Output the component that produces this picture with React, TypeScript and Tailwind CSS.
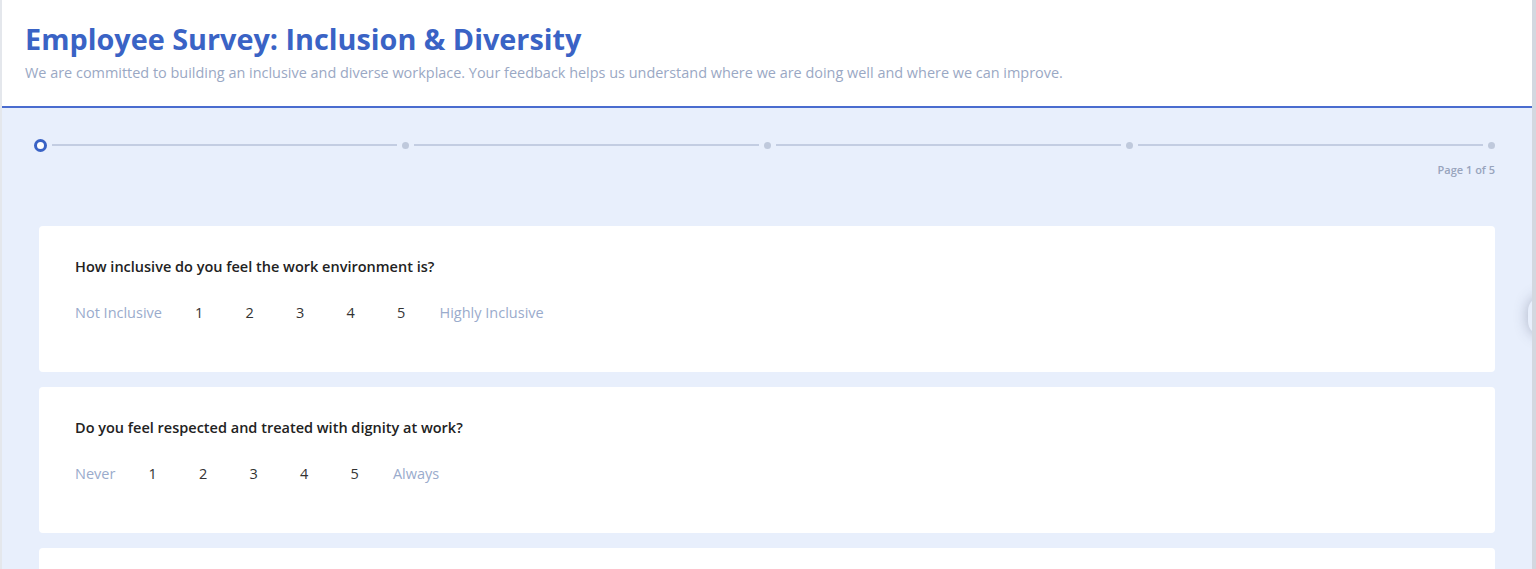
import React from "react";

const questions = [
  { text: "How inclusive do you feel the work environment is?", low: "Not Inclusive", high: "Highly Inclusive" },
  { text: "Do you feel respected and treated with dignity at work?", low: "Never", high: "Always" },
];

function ProgressBar() {
  const steps = [1, 2, 3, 4, 5];
  return (
    <div className="flex flex-col">
      <div className="flex items-center h-[14px] pl-[32px] pr-[37px]">
        {steps.map((s, i) => (
          <React.Fragment key={s}>
            {i > 0 && <div className="flex-1 h-[2px] bg-[#c3cde2] mx-[5px]" />}
            {i === 0 ? (
              <div className="w-[13px] h-[13px] rounded-full border-[3px] border-[#3a63c5] bg-white shrink-0" />
            ) : (
              <div className="w-[7px] h-[7px] rounded-full bg-[#bfc9dc] shrink-0" />
            )}
          </React.Fragment>
        ))}
      </div>
      <div className="flex justify-end pr-[37px] mt-[10px]">
        <span className="text-[11px] font-semibold text-[#98a4bc]">Page 1 of 5</span>
      </div>
    </div>
  );
}

function QuestionCard({ text, low, high }: { text: string; low: string; high: string }) {
  return (
    <div className="bg-white rounded-[4px] px-[36px] pt-[30px] pb-[40px] h-[146px] shrink-0">
      <h3 className="text-[14.5px] font-semibold text-[#222] leading-[21px]">{text}</h3>
      <div className="flex items-center mt-[25px] text-[14.5px] leading-[22px]">
        <span className="text-[#9aabcc] mr-[12px]">{low}</span>
        {[1, 2, 3, 4, 5].map((n) => (
          <button key={n} className="w-[50.5px] text-center text-[#333]">
            {n}
          </button>
        ))}
        <span className="text-[#9aabcc] ml-[13px]">{high}</span>
      </div>
    </div>
  );
}

export default function App() {
  return (
    <div
      className="h-[569px] overflow-hidden flex bg-[#e4e7ec]"
      style={{ fontFamily: '"Open Sans", "Noto Sans", sans-serif' }}
    >
      <div className="flex-1 ml-[2px] flex flex-col bg-[#e8effc] relative overflow-hidden">
        <header className="bg-white h-[108px] px-[23px] pt-[20px] border-b-2 border-[#4a6ccf] shrink-0">
          <h1 className="text-[28.8px] font-bold text-[#3a63c5] leading-[38px]">
            Employee Survey: Inclusion &amp; Diversity
          </h1>
          <p className="text-[14.45px] text-[#9aa8c4] mt-[4px]">
            We are committed to building an inclusive and diverse workplace. Your feedback helps us understand where we are doing well and where we can improve.
          </p>
        </header>
        <main className="flex flex-col pt-[30px]">
          <ProgressBar />
          <div className="flex flex-col gap-[15px] pl-[37px] pr-[37px] mt-[47px]">
            {questions.map((q) => (
              <QuestionCard key={q.text} {...q} />
            ))}
            {/* next question card, only its top edge is in view */}
            <div className="bg-white rounded-[4px] h-[146px] shrink-0" />
          </div>
        </main>
        <div className="absolute right-[-26px] top-[296px] w-[30px] h-[40px] rounded-full bg-[#e8effc] shadow-[0_0_14px_rgba(60,70,100,0.35)]" />
      </div>
      <div className="w-[4px] bg-[#d3d8e0]" />
    </div>
  );
}
